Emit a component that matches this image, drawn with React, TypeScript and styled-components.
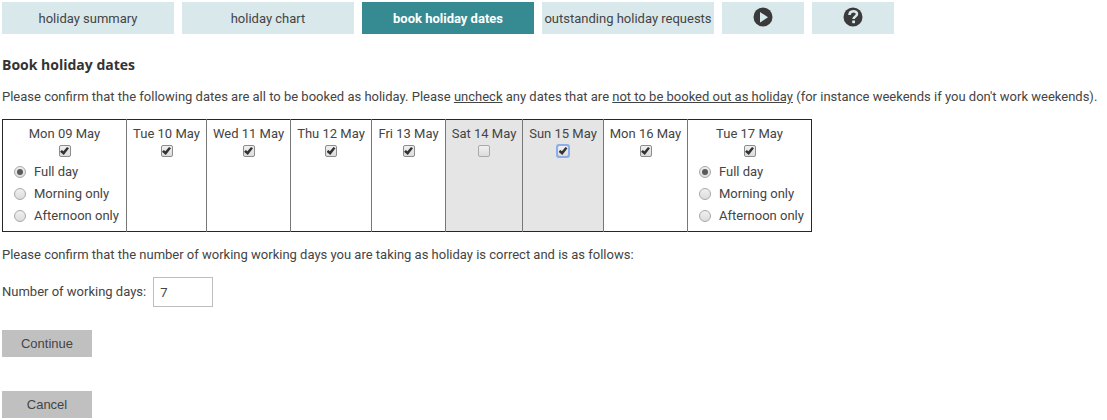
import React, { useState } from 'react';
import styled, { createGlobalStyle, css } from 'styled-components';

const GlobalStyle = createGlobalStyle`
  body {
    margin: 0;
    background: #fff;
    color: #444;
    font: 13px/20px Roboto, "Noto Sans", sans-serif;
  }
`;

const Page = styled.main`
  padding: 2px;
`;

const Tabs = styled.nav`
  display: flex;
  gap: 8px;
  margin-bottom: 21px;
`;

const Tab = styled.a<{ $active?: boolean; $small?: boolean }>`
  display: flex;
  align-items: center;
  justify-content: center;
  box-sizing: border-box;
  width: ${(p) => (p.$small ? 82 : 172)}px;
  height: 32px;
  padding-top: 1px;
  white-space: nowrap;
  text-decoration: none;
  background: ${(p) => (p.$active ? '#368b92' : '#d9e8eb')};
  color: ${(p) => (p.$active ? '#fff' : '#444')};
  font-weight: ${(p) => (p.$active ? 700 : 400)};
`;

const Icon = styled.svg`
  width: 20px;
  height: 20px;
  margin-bottom: 3px;
`;

const Heading = styled.h1`
  margin: 0 0 12px;
  color: #333;
  font: 700 14px/20px "Open Sans", "Noto Sans", sans-serif;
`;

const Text = styled.p`
  margin: 0 0 12px;
`;

const Days = styled.table`
  border-collapse: collapse;
  border: 1px solid #262626;
  margin-bottom: 13px;
`;

const Day = styled.td<{ $weekend?: boolean; $width: number }>`
  box-sizing: border-box;
  width: ${(p) => p.$width}px;
  height: 112px;
  padding: 4px 0 2px;
  vertical-align: top;
  text-align: center;
  white-space: nowrap;
  border-left: 1px solid #777;
  background: ${(p) => (p.$weekend ? '#e5e5e5' : '#fff')};

  &:first-child {
    border-left-color: #262626;
  }
`;

const DateLabel = styled.label`
  display: flex;
  flex-direction: column;
  align-items: center;
  gap: 1px;
`;

const control = css`
  appearance: none;
  box-sizing: border-box;
  flex: none;
  display: grid;
  place-items: center;
  width: 12px;
  height: 12px;
  margin: 0;
  border: 1px solid #a9a9a9;
  background: linear-gradient(#f0f0f0, #dcdcdc);
`;

const Check = styled.input`
  ${control}
  border-radius: 2px;

  &:checked {
    border-color: #8c8c8c;
  }

  &:checked::before {
    content: '';
    width: 9px;
    height: 8px;
    background: #333;
    clip-path: polygon(0 58%, 20% 36%, 38% 52%, 78% 0, 100% 16%, 42% 100%);
  }

  &:focus {
    outline: 2px solid #8aaeea;
    outline-offset: -1px;
  }
`;

const Options = styled.div`
  display: flex;
  flex-direction: column;
  gap: 2px;
  padding: 5px 0 0 11px;
`;

const Option = styled.label`
  display: flex;
  align-items: center;
  gap: 8px;
`;

const Radio = styled.input`
  ${control}
  border-radius: 50%;

  &:checked::before {
    content: '';
    width: 6px;
    height: 6px;
    border-radius: 50%;
    background: #5a5a5a;
  }
`;

const Field = styled.div`
  display: flex;
  align-items: center;
  gap: 7px;
  margin-bottom: 23px;
`;

const NumberInput = styled.input`
  box-sizing: border-box;
  width: 60px;
  height: 30px;
  padding: 0 6px;
  border: 1px solid #bdbdbd;
  background: #fff;
  color: inherit;
  font: inherit;
`;

const Actions = styled.div`
  display: flex;
  flex-direction: column;
  align-items: flex-start;
  gap: 34px;
`;

const Button = styled.button`
  width: 90px;
  height: 27px;
  padding: 0;
  border: 0;
  background: #c0c0c0;
  color: #444;
  font: 13px "Liberation Sans", Arial, sans-serif;
`;

type DayInfo = { date: string; width: number; weekend?: boolean; parts?: boolean; focus?: boolean };

const days: DayInfo[] = [
  { date: 'Mon 09 May', width: 124, parts: true },
  { date: 'Tue 10 May', width: 80 },
  { date: 'Wed 11 May', width: 84 },
  { date: 'Thu 12 May', width: 81 },
  { date: 'Fri 13 May', width: 74 },
  { date: 'Sat 14 May', width: 77, weekend: true },
  { date: 'Sun 15 May', width: 81, weekend: true, focus: true },
  { date: 'Mon 16 May', width: 84 },
  { date: 'Tue 17 May', width: 124, parts: true },
];

const parts = ['Full day', 'Morning only', 'Afternoon only'];

export default function App() {
  const [count, setCount] = useState('7');
  return (
    <>
      <GlobalStyle />
      <Page>
        <Tabs>
          <Tab href="#summary">holiday summary</Tab>
          <Tab href="#chart">holiday chart</Tab>
          <Tab href="#book" $active>book holiday dates</Tab>
          <Tab href="#requests">outstanding holiday requests</Tab>
          <Tab href="#play" $small aria-label="Play tutorial">
            <Icon viewBox="0 0 20 20">
              <circle cx="10" cy="10" r="9.5" fill="#3a3a3a" />
              <path d="M7 5v10.500l8-5.250z" fill="#d9e8eb" />
            </Icon>
          </Tab>
          <Tab href="#help" $small aria-label="Help">
            <Icon viewBox="0 0 20 20">
              <circle cx="10" cy="10" r="9.5" fill="#3a3a3a" />
              <path
                d="M6.500 7.900C6.500 3 14 3.200 14 7c0 2.600-3.400 2.300-3.400 5"
                fill="none"
                stroke="#d9e8eb"
                strokeWidth="2.6"
              />
              <path d="M9.200 13.500H12v2.700H9.200z" fill="#d9e8eb" />
            </Icon>
          </Tab>
        </Tabs>

        <Heading>Book holiday dates</Heading>
        <Text>
          Please confirm that the following dates are all to be booked as holiday. Please <u>uncheck</u> any dates that
          are <u>not to be booked out as holiday</u> (for instance weekends if you don't work weekends).
        </Text>

        <Days>
          <tbody>
            <tr>
              {days.map((d) => (
                <Day key={d.date} $width={d.width} $weekend={d.weekend}>
                  <DateLabel>
                    {d.date}
                    <Check type="checkbox" defaultChecked={d.date !== 'Sat 14 May'} autoFocus={d.focus} />
                  </DateLabel>
                  {d.parts && (
                    <Options>
                      {parts.map((p, i) => (
                        <Option key={p}>
                          <Radio type="radio" name={d.date} defaultChecked={i === 0} />
                          {p}
                        </Option>
                      ))}
                    </Options>
                  )}
                </Day>
              ))}
            </tr>
          </tbody>
        </Days>

        <Text>
          Please confirm that the number of working working days you are taking as holiday is correct and is as follows:
        </Text>
        <Field>
          <label htmlFor="count">Number of working days:</label>
          <NumberInput id="count" value={count} onChange={(e) => setCount(e.target.value)} />
        </Field>
        <Actions>
          <Button type="button">Continue</Button>
          <Button type="button">Cancel</Button>
        </Actions>
      </Page>
    </>
  );
}
